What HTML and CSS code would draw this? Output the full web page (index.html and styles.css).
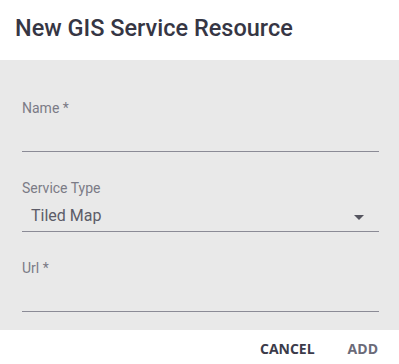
FILE: index.html
```html
<!DOCTYPE html>
<html lang="en">

<head>
    <meta charset="UTF-8">
    <meta name="viewport" content="width=device-width, initial-scale=1.0">
    <title>New GIS Service Resource</title>
    <link rel="stylesheet" href="styles.css">
</head>

<body>
    <div class="dialog">
        <div class="dialog-title">New GIS Service Resource</div>

        <div class="dialog-content">
            <div class="field">
                <label class="field-label" for="name">Name *</label>
                <input class="field-input" type="text" id="name" autocomplete="off">
            </div>

            <div class="field">
                <div class="field-label">Service Type</div>
                <div class="field-select">
                    <span class="select-value">Tiled Map</span>
                    <span class="select-arrow"></span>
                </div>
            </div>

            <div class="field">
                <label class="field-label" for="url">Url *</label>
                <input class="field-input" type="text" id="url" autocomplete="off">
            </div>
        </div>

        <div class="dialog-actions">
            <button class="action-btn cancel-btn">CANCEL</button>
            <button class="action-btn add-btn" disabled>ADD</button>
        </div>
    </div>
</body>

</html>
```

FILE: styles.css
```css
body {
    margin: 0;
    background-color: #ffffff;
    font-family: Roboto, "Liberation Sans", Arial, sans-serif;
}

.dialog {
    width: 399px;
    height: 364px;
    background-color: #ffffff;
}

.dialog-title {
    height: 60px;
    box-sizing: border-box;
    padding: 15px 15px 0;
    font-size: 23.5px;
    font-weight: 500;
    line-height: 27px;
    color: #363644;
}

.dialog-content {
    background-color: #e9e9e9;
    padding: 40px 20px 18px 22px;
    height: 270px;
    box-sizing: border-box;
}

.field {
    margin-bottom: 28px;
}

.field:last-child {
    margin-bottom: 0;
}

.field-label {
    display: block;
    font-size: 14px;
    line-height: 16px;
    color: #7b7b86;
}

.field-input {
    display: block;
    width: 100%;
    height: 36px;
    box-sizing: border-box;
    margin: 0;
    padding: 0;
    border: none;
    border-bottom: 1px solid #8b8b96;
    background: transparent;
    outline: none;
    font-family: inherit;
    font-size: 16px;
}

.field-select {
    display: flex;
    align-items: flex-start;
    justify-content: space-between;
    height: 36px;
    box-sizing: border-box;
    padding: 10px 15px 0 9px;
    border-bottom: 1px solid #8b8b96;
}

.select-value {
    font-size: 16px;
    line-height: 19px;
    color: #5c5c68;
}

.select-arrow {
    margin-top: 9px;
    width: 0;
    height: 0;
    border-left: 5px solid transparent;
    border-right: 5px solid transparent;
    border-top: 5px solid #55555f;
}

.dialog-actions {
    display: flex;
    justify-content: flex-end;
    gap: 33px;
    padding: 9px 21px 0 0;
}

.action-btn {
    padding: 0;
    border: none;
    background: none;
    font-family: "Open Sans", "Liberation Sans", sans-serif;
    font-size: 14px;
    font-weight: 700;
    line-height: 19px;
    cursor: pointer;
}

.cancel-btn {
    color: #3b3b4a;
}

.add-btn {
    color: #6b6b78;
}
```
